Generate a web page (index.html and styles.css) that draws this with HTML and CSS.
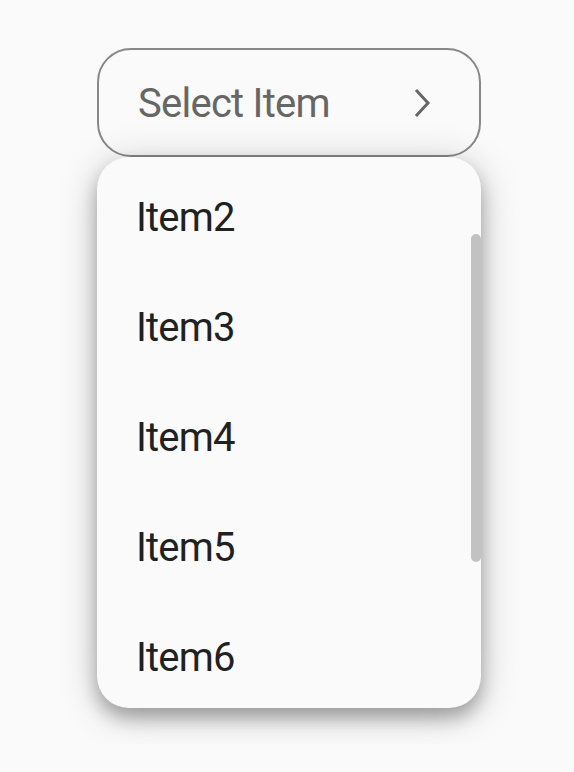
FILE: index.html
```html
<!DOCTYPE html>
<html>
<head>
<meta charset="utf-8">
<link rel="stylesheet" href="styles.css">
</head>
<body>
<div class="screen">
  <div class="select">
    <span class="select-label">Select Item</span>
    <svg class="chevron" width="20" height="30" viewBox="0 0 20 30"><path d="M3 2 L15 15 L3 28" fill="none" stroke="#666" stroke-width="3"/></svg>
  </div>
  <div class="popup-layer">
    <div class="menu">
      <ul class="menu-list">
        <li class="menu-item">Item2</li>
        <li class="menu-item">Item3</li>
        <li class="menu-item">Item4</li>
        <li class="menu-item">Item5</li>
        <li class="menu-item">Item6</li>
      </ul>
      <div class="scrollbar"></div>
    </div>
  </div>
</div>
</body>
</html>
```
FILE: styles.css
```css
html, body {
  margin: 0;
  padding: 0;
  background: #fafafa;
  font-family: Roboto, "Liberation Sans", sans-serif;
}
.screen {
  position: relative;
  width: 574px;
  height: 772px;
  overflow: hidden;
}
.select {
  position: absolute;
  left: 97px;
  top: 48px;
  width: 384px;
  height: 109px;
  box-sizing: border-box;
  border: 2px solid #888;
  border-radius: 34px;
  display: flex;
  align-items: center;
  justify-content: space-between;
  padding: 2px 46px 0 39px;
}
.select-label {
  font-size: 40px;
  letter-spacing: -0.75px;
  color: #666;
}
.chevron {
  display: block;
  margin-top: -2px;
}
.popup-layer {
  position: absolute;
  left: 57px;
  top: 117px;
  width: 463px;
  height: 627px;
  overflow: hidden;
  padding: 40px 39px 0 40px;
  box-sizing: border-box;
}
.menu {
  position: relative;
  width: 384px;
  height: 551px;
  background: #fafafa;
  border-radius: 32px;
  overflow: hidden;
  box-shadow: 0 10px 18px rgba(0,0,0,0.28), 0 6px 40px rgba(0,0,0,0.2);
}
.menu-list {
  list-style: none;
  margin: 0;
  padding: 6px 0 0 0;
}
.menu-item {
  height: 110px;
  line-height: 110px;
  padding-left: 39px;
  font-size: 40px;
  letter-spacing: -0.8px;
  color: #212121;
}
.scrollbar {
  position: absolute;
  right: 0;
  top: 77px;
  width: 10px;
  height: 328px;
  background: #c2c2c2;
  border-radius: 5px;
}
```
